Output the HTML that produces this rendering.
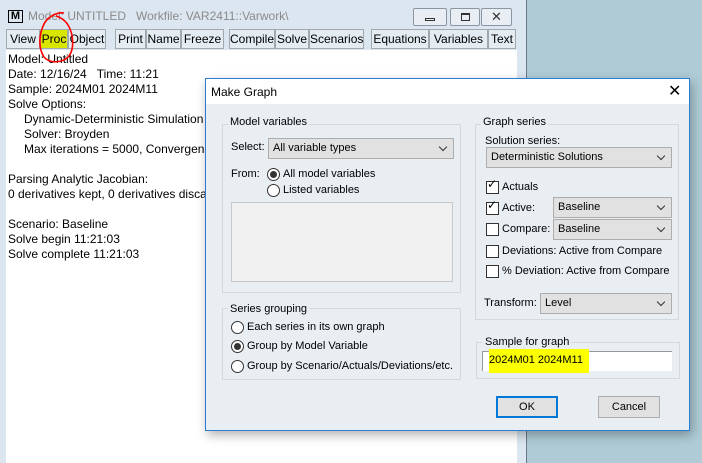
<!DOCTYPE html>
<html><head><meta charset="utf-8"><style>
*{box-sizing:border-box;margin:0;padding:0}
body{width:702px;height:463px;overflow:hidden;background:#aecbd6;font-family:"Liberation Sans",sans-serif;font-size:12px;color:#000;position:relative}
.a{position:absolute}
.win{left:0;top:0;width:527px;height:463px;background:#dce6f0;border-right:1px solid #6a7a88}
.tb{top:29px;height:20px;border:1px solid #a0a8b0;background:#e4ecf2;text-align:center;line-height:18px;font-size:12px}
.content{left:6px;top:50px;width:511px;height:413px;background:#fff}
.line{left:8px;font-size:12px;white-space:nowrap}
.wb{top:8px;height:18px;border:1px solid #8a96a2;border-radius:2px;background:#e8eef4}
.dlg{left:205px;top:78px;width:485px;height:353px;background:#e9eef3;border:1px solid #2b7cd3;box-shadow:2px 4px 10px rgba(0,0,0,.3);font-size:11px}
.grp{border:1px solid #d4d9de}
.gl{background:#e9eef3;padding:0 2px}
.cb{height:21px;border:1px solid #adadad;background:#e1e1e1;padding-left:4px;line-height:19px}
.cb:after{content:"";position:absolute;right:7px;top:5px;width:5px;height:5px;border-right:1px solid #333;border-bottom:1px solid #333;transform:rotate(45deg)}
.rb{width:13px;height:13px;border:1px solid #333;border-radius:50%;background:#fff}
.rb.on:after{content:"";position:absolute;left:2px;top:2px;width:7px;height:7px;border-radius:50%;background:#333}
.ck{width:13px;height:13px;border:1px solid #333;background:#fff}
.btn{height:22px;border:1px solid #adadad;background:#e1e1e1;text-align:center;line-height:20px}
</style></head><body>
<div class="a win"></div>
<div class="a" style="left:8px;top:10px;width:15px;height:13px;border:1px solid #000;font-size:11px;line-height:11px;text-align:center;font-weight:bold">M</div>
<div class="a" style="left:28px;top:9px;color:#8a8a8a;font-size:12px">Model: UNTITLED &nbsp;&nbsp;Workfile: VAR2411::Varwork\</div>
<div class="a wb" style="left:413px;width:34px"><div class="a" style="left:11px;top:9px;width:10px;height:3px;border:1px solid #333"></div></div>
<div class="a wb" style="left:450px;width:30px"><div class="a" style="left:10px;top:4px;width:9px;height:8px;border:1px solid #333;border-top-width:2px"></div></div>
<div class="a wb" style="left:481px;width:31px;text-align:center;line-height:15px;font-size:13px;color:#333">✕</div>
<div class="a tb" style="left:6px;width:34px">View</div>
<div class="a tb" style="left:40px;width:28px;background:#d8e600">Proc</div>
<div class="a tb" style="left:68px;width:38px">Object</div>
<div class="a tb" style="left:115px;width:31px">Print</div>
<div class="a tb" style="left:146px;width:35px">Name</div>
<div class="a tb" style="left:181px;width:43px">Freeze</div>
<div class="a tb" style="left:229px;width:46px">Compile</div>
<div class="a tb" style="left:275px;width:34px">Solve</div>
<div class="a tb" style="left:309px;width:55px">Scenarios</div>
<div class="a tb" style="left:371px;width:58px">Equations</div>
<div class="a tb" style="left:429px;width:59px">Variables</div>
<div class="a tb" style="left:488px;width:28px">Text</div>
<div class="a content"></div>
<div class="a line" style="top:52px">Model: Untitled</div>
<div class="a line" style="top:67px">Date: 12/16/24 &nbsp;&nbsp;Time: 11:21</div>
<div class="a line" style="top:82px">Sample: 2024M01 2024M11</div>
<div class="a line" style="top:97px">Solve Options:</div>
<div class="a line" style="top:112px;left:24px">Dynamic-Deterministic Simulation</div>
<div class="a line" style="top:127px;left:24px">Solver: Broyden</div>
<div class="a line" style="top:142px;left:24px">Max iterations = 5000, Convergence</div>
<div class="a line" style="top:172px">Parsing Analytic Jacobian:</div>
<div class="a line" style="top:187px">0 derivatives kept, 0 derivatives discarded</div>
<div class="a line" style="top:217px">Scenario: Baseline</div>
<div class="a line" style="top:232px">Solve begin 11:21:03</div>
<div class="a line" style="top:247px">Solve complete 11:21:03</div>
<svg class="a" style="left:0;top:0" width="120" height="80"><path d="M64,13 C58,12 48,16 44,24 C39,34 38,48 44,57 C50,64 63,63 69,56 C75,48 73,33 68,25 C65,20 60,17 56,16" fill="none" stroke="#f00" stroke-width="1.6"/></svg>

<div class="a dlg">
<div class="a" style="left:0;top:0;width:483px;height:25px;background:#fff"></div>
<div class="a" style="left:5px;top:6px;font-size:12px">Make Graph</div>
<div class="a" style="left:462px;top:2px;font-size:16px">✕</div>

<div class="a grp" style="left:16px;top:45px;width:239px;height:169px"></div>
<div class="a gl" style="left:22px;top:37px">Model variables</div>
<div class="a" style="left:25px;top:62px">Select:</div>
<div class="a cb" style="left:62px;top:59px;width:186px">All variable types</div>
<div class="a" style="left:25px;top:89px">From:</div>
<div class="a rb on" style="left:61px;top:89px"></div>
<div class="a" style="left:77px;top:89px">All model variables</div>
<div class="a rb" style="left:61px;top:105px"></div>
<div class="a" style="left:77px;top:105px">Listed variables</div>
<div class="a" style="left:25px;top:123px;width:222px;height:80px;background:#f0f0f0;border:1px solid #c8c8c8"></div>

<div class="a grp" style="left:16px;top:229px;width:239px;height:72px"></div>
<div class="a gl" style="left:22px;top:224px">Series grouping</div>
<div class="a rb" style="left:25px;top:242px"></div>
<div class="a" style="left:41px;top:242px">Each series in its own graph</div>
<div class="a rb on" style="left:25px;top:261px"></div>
<div class="a" style="left:41px;top:261px">Group by Model Variable</div>
<div class="a rb" style="left:25px;top:281px"></div>
<div class="a" style="left:41px;top:281px">Group by Scenario/Actuals/Deviations/etc.</div>

<div class="a grp" style="left:269px;top:45px;width:204px;height:196px"></div>
<div class="a gl" style="left:275px;top:37px">Graph series</div>
<div class="a" style="left:279px;top:56px">Solution series:</div>
<div class="a cb" style="left:280px;top:68px;width:186px">Deterministic Solutions</div>
<div class="a ck" style="left:280px;top:102px"></div><div class="a" style="left:281px;top:98px;font-size:12px">✓</div>
<div class="a" style="left:296px;top:102px">Actuals</div>
<div class="a ck" style="left:280px;top:123px"></div><div class="a" style="left:281px;top:119px;font-size:12px">✓</div>
<div class="a" style="left:296px;top:123px">Active:</div>
<div class="a cb" style="left:347px;top:118px;width:119px">Baseline</div>
<div class="a ck" style="left:280px;top:144px"></div>
<div class="a" style="left:296px;top:144px">Compare:</div>
<div class="a cb" style="left:347px;top:140px;width:119px">Baseline</div>
<div class="a ck" style="left:280px;top:166px"></div>
<div class="a" style="left:296px;top:166px">Deviations: Active from Compare</div>
<div class="a ck" style="left:280px;top:186px"></div>
<div class="a" style="left:296px;top:186px">% Deviation: Active from Compare</div>
<div class="a" style="left:278px;top:218px">Transform:</div>
<div class="a cb" style="left:334px;top:214px;width:132px">Level</div>

<div class="a grp" style="left:270px;top:263px;width:204px;height:37px"></div>
<div class="a gl" style="left:277px;top:257px">Sample for graph</div>
<div class="a" style="left:276px;top:272px;width:190px;height:20px;background:#fff;border-top:1px solid #999;border-left:1px solid #999"></div>
<div class="a" style="left:283px;top:270px;width:100px;height:24px;background:#fbff00"></div>
<div class="a" style="left:283px;top:275px">2024M01 2024M11</div>

<div class="a btn" style="left:290px;top:317px;width:62px;border:2px solid #0078d7;line-height:18px">OK</div>
<div class="a btn" style="left:392px;top:317px;width:62px">Cancel</div>
</div>
</body></html>
